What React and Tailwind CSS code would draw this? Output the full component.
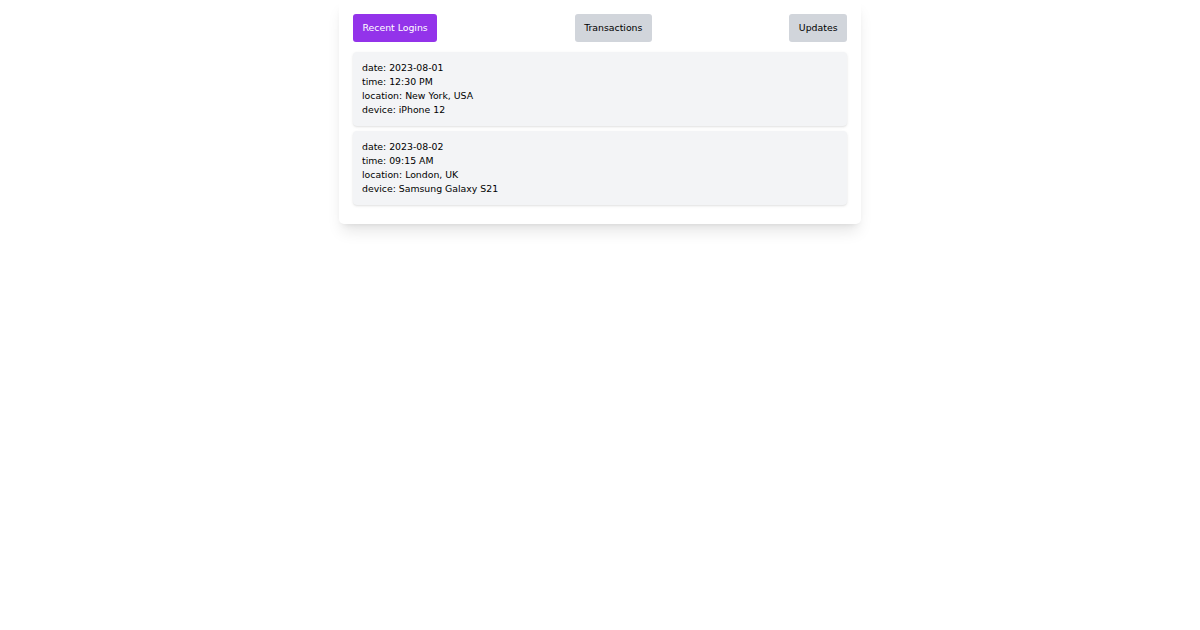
import React, { useState } from 'react'

const logins = [
  { date: '2023-08-01', time: '12:30 PM', location: 'New York, USA', device: 'iPhone 12' },
  { date: '2023-08-02', time: '09:15 AM', location: 'London, UK', device: 'Samsung Galaxy S21' },
]

const tabs = ['Recent Logins', 'Transactions', 'Updates']

const App = () => {
  const [active, setActive] = useState('Recent Logins')

  return (
    <div className="w-[1200px] h-[630px] bg-white flex justify-center" style={{ fontFamily: '"DejaVu Sans", sans-serif' }}>
      <div className="w-[522px] h-fit bg-white rounded-[5px] shadow-lg px-[14px] pt-[14px] pb-[14px]">
        <div className="flex justify-between mb-[10px]">
          {tabs.map((t) => (
            <button
              key={t}
              onClick={() => setActive(t)}
              className={
                t === active
                  ? 'bg-[#9333ea] text-white text-[9.33px] leading-[14px] px-[9.5px] py-[7px] rounded-[3px]'
                  : 'bg-[#d1d5db] text-black text-[9.33px] leading-[14px] px-[9.5px] py-[7px] rounded-[3px]'
              }
            >
              {t}
            </button>
          ))}
        </div>
        {logins.map((l, i) => (
          <div key={i} className="bg-[#f3f4f6] rounded-[4px] shadow-sm p-[9px] mb-[5px] text-[9.33px] leading-[14px] text-black">
            <p>date: {l.date}</p>
            <p>time: {l.time}</p>
            <p>location: {l.location}</p>
            <p>device: {l.device}</p>
          </div>
        ))}
      </div>
    </div>
  )
}

export default App
